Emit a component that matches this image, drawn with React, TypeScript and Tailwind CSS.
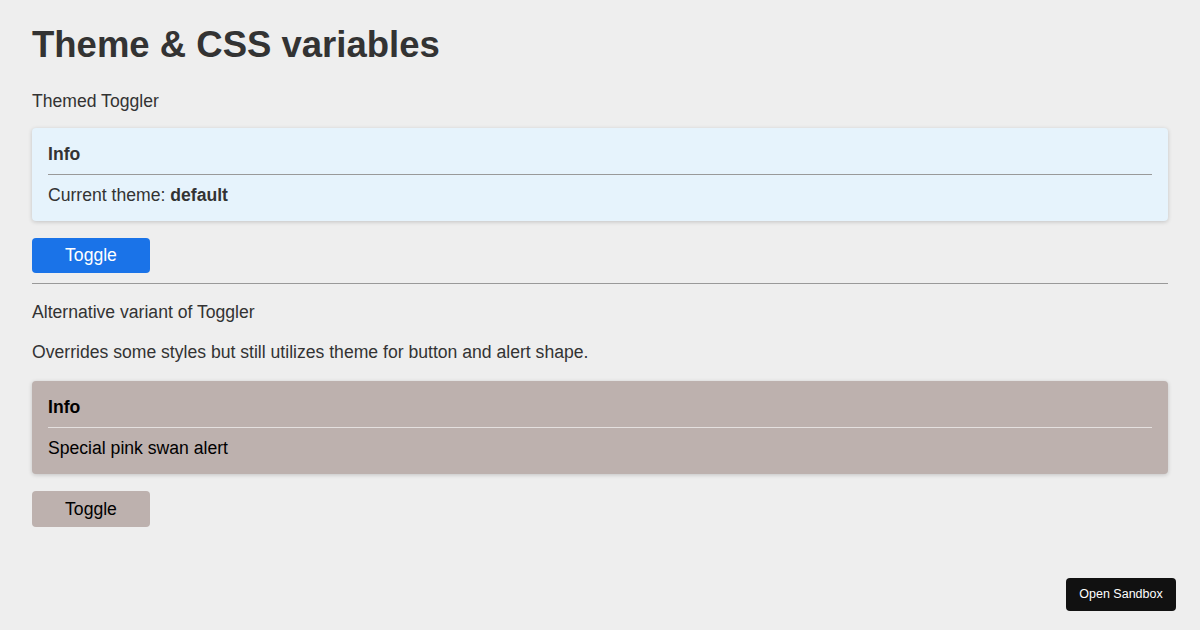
import React, { useState } from "react";

// Alert box + toggle button, themed by props
interface AlertProps {
  title: string;
  children: React.ReactNode;
  variant: "default" | "swan";
}

const Alert: React.FC<AlertProps> = ({ title, children, variant }) => {
  const swan = variant === "swan";
  return (
    <div
      className={
        swan
          ? "rounded bg-[#bdb1ae] px-4 py-4 text-black shadow-[0_1px_4px_rgba(0,0,0,0.18)]"
          : "rounded bg-[#e6f3fc] px-4 py-4 text-[#333] shadow-[0_1px_4px_rgba(0,0,0,0.18)]"
      }
    >
      <div
        className={
          swan
            ? "border-b border-[#e4e0df] pb-[10px] font-bold leading-5"
            : "border-b border-[#999] pb-[10px] font-bold leading-5"
        }
      >
        {title}
      </div>
      <div className="mt-[10px] leading-5">{children}</div>
    </div>
  );
};

export default function App() {
  const [theme, setTheme] = useState("default");

  return (
    <div className="relative min-h-[630px] bg-[#eeeeee] px-8 pt-[23px] text-[17.6px] text-[#333] font-['Liberation_Sans',Arial,sans-serif]">
      <h1 className="text-[36.5px] font-bold leading-[44px]">Theme &amp; CSS variables</h1>

      <p className="mt-[24px] leading-5">Themed Toggler</p>

      <div className="mt-[17px]">
        <Alert title="Info" variant="default">
          Current theme: <b>{theme}</b>
        </Alert>
      </div>

      <button
        className="mt-[17px] h-[35px] w-[118px] rounded bg-[#1a73e8] text-white"
        onClick={() => setTheme(theme === "default" ? "dark" : "default")}
      >
        Toggle
      </button>

      <hr className="mt-[10px] border-t border-[#999]" />

      <p className="mt-[18px] leading-5">Alternative variant of Toggler</p>
      <p className="mt-5 leading-5">
        Overrides some styles but still utilizes theme for button and alert shape.
      </p>

      <div className="mt-[19px]">
        <Alert title="Info" variant="swan">
          Special pink swan alert
        </Alert>
      </div>

      <button className="mt-[17px] h-[36px] w-[118px] rounded bg-[#bdb1ae] text-black">
        Toggle
      </button>

      {/* Sandbox link */}
      <button className="absolute bottom-[19px] right-[24px] h-[33px] w-[110px] rounded bg-[#111] text-[12.5px] text-white">
        Open Sandbox
      </button>
    </div>
  );
}
